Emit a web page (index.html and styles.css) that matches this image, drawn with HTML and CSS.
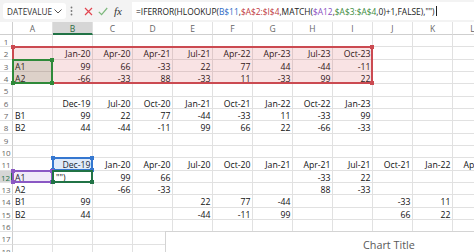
FILE: index.html
```html
<!DOCTYPE html>
<html>
<head>
<meta charset="utf-8">
<link rel="stylesheet" href="styles.css">
</head>
<body>
<div class="app">
  <div class="fbar">
    <div class="namebox"><span>DATEVALUE</span>
      <svg class="chev" width="8" height="5" viewBox="0 0 8 5"><polyline points="0.5,0.5 4,4 7.5,0.5" fill="none" stroke="#555" stroke-width="1"/></svg>
    </div>
    <svg class="dots" width="3" height="10" viewBox="0 0 3 10"><circle cx="1.5" cy="1.5" r="0.9" fill="#777"/><circle cx="1.5" cy="5" r="0.9" fill="#777"/><circle cx="1.5" cy="8.5" r="0.9" fill="#777"/></svg>
    <svg class="ico" width="9" height="9" viewBox="0 0 9 9"><path d="M1 1 L8 8 M8 1 L1 8" stroke="#e2454f" stroke-width="1.2" fill="none"/></svg>
    <svg class="ico" width="10" height="9" viewBox="0 0 10 9"><polyline points="0.8,4.8 3.6,7.6 9.2,1" stroke="#7cb87c" stroke-width="1.2" fill="none"/></svg>
    <div class="fx">fx</div>
    <div class="formula">=IFERROR(HLOOKUP(<span class="fb">B$11</span>,<span class="fr">$A$2:$I$4</span>,MATCH(<span class="fp">$A12</span>,<span class="fg">$A$3:$A$4</span>,0)+1,FALSE),"")<span class="caret"></span></div>
  </div>

  <div class="sheetwrap">
    <div class="sheet">
      <div class="corner"></div><div class="h">A</div><div class="h sel">B</div><div class="h">C</div><div class="h">D</div><div class="h">E</div><div class="h">F</div><div class="h">G</div><div class="h">H</div><div class="h">I</div><div class="h">J</div><div class="h">K</div><div class="h">L</div>

      <div class="r">1</div><div></div><div></div><div></div><div></div><div></div><div></div><div></div><div></div><div></div><div></div><div></div><div></div>

      <div class="r">2</div><div></div><div class="n">Jan-20</div><div class="n">Apr-20</div><div class="n">Apr-21</div><div class="n">Jul-21</div><div class="n">Apr-22</div><div class="n">Apr-23</div><div class="n">Jul-23</div><div class="n">Oct-23</div><div></div><div></div><div></div>

      <div class="r">3</div><div>A1</div><div class="n">99</div><div class="n">66</div><div class="n">-33</div><div class="n">22</div><div class="n">77</div><div class="n">44</div><div class="n">-44</div><div class="n">-11</div><div></div><div></div><div></div>

      <div class="r">4</div><div>A2</div><div class="n">-66</div><div class="n">-33</div><div class="n">88</div><div class="n">-33</div><div class="n">11</div><div class="n">-33</div><div class="n">99</div><div class="n">22</div><div></div><div></div><div></div>

      <div class="r">5</div><div></div><div></div><div></div><div></div><div></div><div></div><div></div><div></div><div></div><div></div><div></div><div></div>

      <div class="r">6</div><div></div><div class="n">Dec-19</div><div class="n">Jul-20</div><div class="n">Oct-20</div><div class="n">Jan-21</div><div class="n">Oct-21</div><div class="n">Jan-22</div><div class="n">Oct-22</div><div class="n">Jan-23</div><div></div><div></div><div></div>

      <div class="r">7</div><div>B1</div><div class="n">99</div><div class="n">22</div><div class="n">77</div><div class="n">-44</div><div class="n">-33</div><div class="n">11</div><div class="n">-33</div><div class="n">99</div><div></div><div></div><div></div>

      <div class="r">8</div><div>B2</div><div class="n">44</div><div class="n">-44</div><div class="n">-11</div><div class="n">99</div><div class="n">66</div><div class="n">22</div><div class="n">-66</div><div class="n">-33</div><div></div><div></div><div></div>

      <div class="r">9</div><div></div><div></div><div></div><div></div><div></div><div></div><div></div><div></div><div></div><div></div><div></div><div></div>

      <div class="r">10</div><div></div><div></div><div></div><div></div><div></div><div></div><div></div><div></div><div></div><div></div><div></div><div></div>

      <div class="r">11</div><div></div><div class="n">Dec-19</div><div class="n">Jan-20</div><div class="n">Apr-20</div><div class="n">Jul-20</div><div class="n">Oct-20</div><div class="n">Jan-21</div><div class="n">Apr-21</div><div class="n">Jul-21</div><div class="n">Oct-21</div><div class="n">Jan-22</div><div class="n">Apr-22</div>

      <div class="r rsel">12</div><div>A1</div><div class="edit">"")</div><div class="n">99</div><div class="n">66</div><div></div><div></div><div></div><div class="n">-33</div><div class="n">22</div><div></div><div></div><div></div>

      <div class="r">13</div><div>A2</div><div></div><div class="n">-66</div><div class="n">-33</div><div></div><div></div><div></div><div class="n">88</div><div class="n">-33</div><div></div><div></div><div></div>

      <div class="r">14</div><div>B1</div><div class="n">99</div><div></div><div></div><div class="n">22</div><div class="n">77</div><div class="n">-44</div><div></div><div></div><div class="n">-33</div><div class="n">11</div><div></div>

      <div class="r">15</div><div>B2</div><div class="n">44</div><div></div><div></div><div class="n">-44</div><div class="n">-11</div><div class="n">99</div><div></div><div></div><div class="n">66</div><div class="n">22</div><div></div>

      <div class="r">16</div><div></div><div></div><div></div><div></div><div></div><div></div><div></div><div></div><div></div><div></div><div></div><div></div>

      <div class="r">17</div><div></div><div></div><div></div><div></div><div></div><div></div><div></div><div></div><div></div><div></div><div></div><div></div>

      <div class="r">18</div><div></div><div></div><div></div><div></div><div></div><div></div><div></div><div></div><div></div><div></div><div></div><div></div>
    </div>

    <div class="overlay">
      <div class="rng red"><i class="hd tl"></i><i class="hd tr"></i><i class="hd bl"></i><i class="hd br"></i></div>
      <div class="rng green"><i class="hd tr"></i><i class="hd bl"></i><i class="hd br"></i></div>
      <div class="rng blue"><i class="hd tl"></i><i class="hd tr"></i><i class="hd bl"></i><i class="hd br"></i></div>
      <div class="rng purple"><i class="hd tl"></i><i class="hd tr"></i><i class="hd bl"></i><i class="hd br"></i></div>
      <div class="active"><i class="hd bl"></i><i class="hd br"></i></div>
    </div>

    <div class="chart"><div class="ctitle">Chart Title</div></div>
  </div>
</div>
</body>
</html>
```

FILE: styles.css
```css
html, body {
  margin: 0;
  padding: 0;
  background: #ffffff;
}
body {
  font-family: "Open Sans", "Noto Sans", sans-serif;
  width: 474px;
  height: 252px;
  overflow: hidden;
}
.app {
  width: 474px;
  height: 252px;
  overflow: hidden;
  display: flex;
  flex-direction: column;
}

/* formula bar */
.fbar {
  height: 22px;
  flex: none;
  display: flex;
  align-items: center;
  background: #f3f3f3;
}
.namebox {
  margin-left: 3px;
  width: 63px;
  height: 16px;
  box-sizing: border-box;
  background: #ffffff;
  border-radius: 3px;
  display: flex;
  align-items: center;
  justify-content: space-between;
  padding: 0 4px 0 4px;
  font-size: 8.2px;
  color: #333;
}
.chev { flex: none; margin-top: 1px; }
.dots { margin-left: 4px; flex: none; }
.ico { flex: none; margin-left: 11px; }
.ico + .ico { margin-left: 5px; }
.fx {
  margin-left: 6px;
  font-family: "Liberation Serif", serif;
  font-style: italic;
  font-size: 11px;
  color: #333;
  width: 12px;
}
.formula {
  margin-left: 6px;
  flex: 1;
  height: 18px;
  background: #ffffff;
  display: flex;
  align-items: center;
  padding-left: 4px;
  font-size: 8.4px;
  color: #222;
  white-space: nowrap;
  overflow: hidden;
}
.fb { color: #2f6cc6; }
.fr { color: #c0393e; }
.fp { color: #8a4fbf; }
.fg { color: #3b8a3c; }
.caret {
  display: inline-block;
  width: 1px;
  height: 10px;
  background: #222;
  margin-left: 1px;
}

/* sheet */
.sheetwrap {
  position: relative;
  flex: 1;
}
.sheet, .overlay {
  display: grid;
  grid-template-columns: 13px repeat(12, 40px);
  grid-template-rows: 13px repeat(18, 12.33px);
}
.sheet > div {
  box-sizing: border-box;
  border-right: 1px solid #e1e1e1;
  border-bottom: 1px solid #e1e1e1;
  font-size: 8.7px;
  line-height: 12px;
  padding: 1px 2px 0 2px;
  white-space: nowrap;
  color: #111;
}
.sheet > .n {
  text-align: right;
  padding-right: 1.5px;
}
.sheet > .corner {
  border-right-color: #cfcfcf;
  border-bottom-color: #cfcfcf;
}
.sheet > .h {
  text-align: center;
  color: #666;
  font-size: 8.5px;
  line-height: 12px;
  padding-top: 1px;
  border-bottom-color: #cfcfcf;
}
.sheet > .h.sel {
  background: #d6d6d6;
  color: #2e6b44;
  border-bottom: 2px solid #217346;
}
.sheet > .r {
  text-align: center;
  color: #666;
  font-size: 8px;
  padding: 1px 0 0 0;
  border-right-color: #cfcfcf;
}
.sheet > .r.rsel {
  background: #d6d6d6;
  color: #217346;
  border-right: 2px solid #217346;
}
.sheet > .edit {
  padding-left: 3px;
  overflow: visible;
}

/* range highlights */
.overlay {
  position: absolute;
  left: 0;
  top: 0;
  pointer-events: none;
}
.rng, .active {
  position: relative;
  box-sizing: border-box;
  margin: -1px 0 0 -1px;
}
.red {
  grid-row: 3 / 6;
  grid-column: 2 / 11;
  background: rgba(214, 60, 66, 0.14);
  border: 2px solid #cb4a51;
}
.green {
  grid-row: 4 / 6;
  grid-column: 2 / 3;
  background: rgba(60, 100, 40, 0.14);
  border: 2px solid #2f8a3a;
}
.blue {
  grid-row: 12 / 13;
  grid-column: 3 / 4;
  background: rgba(70, 130, 215, 0.16);
  border: 2px solid #3577d0;
}
.purple {
  grid-row: 13 / 14;
  grid-column: 2 / 3;
  background: rgba(140, 90, 200, 0.13);
  border: 2px solid #8a58c4;
}
.active {
  grid-row: 13 / 14;
  grid-column: 3 / 4;
  border: 2px solid #217346;
}
.hd {
  position: absolute;
  width: 4px;
  height: 4px;
}
.red .hd { background: #cb4a51; }
.green .hd { background: #2f8a3a; }
.blue .hd { background: #3577d0; }
.purple .hd { background: #8a58c4; }
.active .hd { background: #217346; }
.tl { left: -3px; top: -3px; }
.tr { right: -3px; top: -3px; }
.bl { left: -3px; bottom: -3px; }
.br { right: -3px; bottom: -3px; }

/* chart */
.chart {
  position: absolute;
  left: 165px;
  top: 209px;
  width: 320px;
  height: 60px;
  box-sizing: border-box;
  background: #ffffff;
  border: 1px solid #d4d4d4;
}
.ctitle {
  padding: 6px 0 0 197px;
  font-size: 10.8px;
  line-height: 14px;
  color: #595959;
  white-space: nowrap;
}
```
